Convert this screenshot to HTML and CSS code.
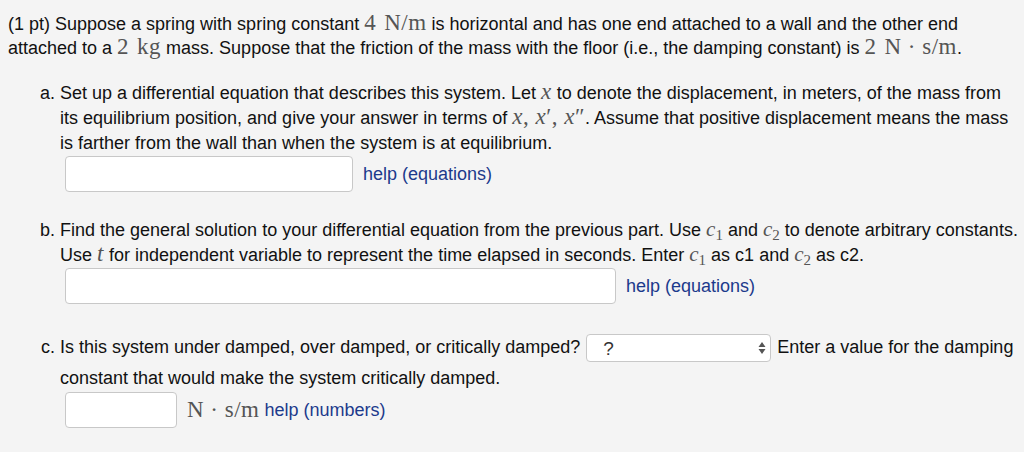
FILE: index.html
```html
<!DOCTYPE html>
<html>
<head>
<meta charset="utf-8">
<link rel="stylesheet" href="styles.css">
</head>
<body>
<div class="problem">
  <p class="intro">(1 pt) Suppose a spring with spring constant <span class="m">4<span class="sp"></span>N/m</span> is horizontal and has one end attached to a wall and the other end attached to a <span class="m">2<span class="sp"></span>kg</span> mass. Suppose that the friction of the mass with the floor (i.e., the damping constant) is <span class="m">2<span class="sp"></span>N · s/m</span>.</p>
  <ol class="parts">
    <li class="part part-a">
      <p class="q">Set up a differential equation that describes this system. Let <span class="m"><i>x</i></span> to denote the displacement, in meters, of the mass from its equilibrium position, and give your answer in terms of <span class="m"><i>x</i>, <i>x</i>′, <i>x</i>″</span>. Assume that positive displacement means the mass is farther from the wall than when the system is at equilibrium.</p>
      <div class="answer"><input class="box box-a" type="text"><a class="help">help (equations)</a></div>
    </li>
    <li class="part part-b">
      <p class="q">Find the general solution to your differential equation from the previous part. Use <span class="m mc"><i>c</i><sub>1</sub></span> and <span class="m mc"><i>c</i><sub>2</sub></span> to denote arbitrary constants. Use <span class="m"><i>t</i></span> for independent variable to represent the time elapsed in seconds. Enter <span class="m mc"><i>c</i><sub>1</sub></span> as c1 and <span class="m mc"><i>c</i><sub>2</sub></span> as c2.</p>
      <div class="answer"><input class="box box-b" type="text"><a class="help">help (equations)</a></div>
    </li>
    <li class="part part-c">
      <p class="q">Is this system under damped, over damped, or critically damped? <span class="select"><span class="sel-val">?</span><svg class="arrows" width="8" height="14" viewBox="0 0 8 14"><path d="M4 1 L7.5 6 L0.5 6 Z M4 13 L7.5 8 L0.5 8 Z" fill="#555"/></svg></span> Enter a value for the damping constant that would make the system critically damped.</p>
      <div class="answer answer-c"><input class="box box-c" type="text"><span class="m unit">N · s/m</span><a class="help">help (numbers)</a></div>
    </li>
  </ol>
</div>
</body>
</html>
```
FILE: styles.css
```css
html, body {
  margin: 0;
  padding: 0;
  background: #f4f4f4;
}
body {
  font-family: "Liberation Sans", Arial, sans-serif;
  font-size: 18px;
  color: #111;
}
.problem {
  padding: 12px 4px 0 8px;
}
.intro {
  margin: 0;
  line-height: 24px;
}
.m {
  font-family: "Liberation Serif", "Times New Roman", serif;
  font-size: 23px;
  letter-spacing: 0.5px;
  color: #555;
  line-height: 0;
}
.mc {
  font-size: 21px;
  letter-spacing: 0;
}
.sp {
  display: inline-block;
  width: 8px;
}
.m i {
  font-style: italic;
}
.m sub {
  font-size: 15px;
  line-height: 0;
  vertical-align: -4px;
  font-style: normal;
}
.parts {
  list-style: lower-alpha;
  margin: 21px 0 0 0;
  padding: 0 0 0 52px;
}
.part {
  margin: 0 0 26px 0;
}
.q {
  margin: 0;
  line-height: 25px;
}
.answer {
  display: flex;
  align-items: center;
  height: 36px;
  padding-left: 5px;
}
.answer-c {
  margin-top: 1px;
}
.box {
  box-sizing: border-box;
  height: 36px;
  background: #fff;
  border: 1px solid #c8c8c8;
  border-radius: 4px;
  margin: 0;
  padding: 0 6px;
}
.box-a { width: 288px; }
.box-b { width: 551px; }
.box-c { width: 112px; }
.help {
  color: #1c3a8c;
  margin-left: 10px;
  text-decoration: none;
}
.unit {
  margin-left: 10px;
  line-height: 36px;
}
.unit + .help {
  margin-left: 5px;
}
.select {
  display: inline-flex;
  align-items: center;
  justify-content: space-between;
  box-sizing: border-box;
  width: 185px;
  height: 28px;
  vertical-align: middle;
  margin: 4px 1px;
  padding: 0 4px 0 16px;
  background: #fff;
  border: 1px solid #c8c8c8;
  border-radius: 4px;
  color: #333;
  line-height: 1;
}
.sel-val {
  font-size: 19px;
}
```
